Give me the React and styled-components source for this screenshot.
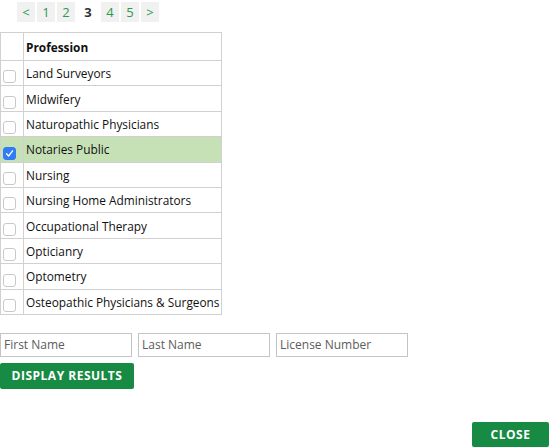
import React, { useState } from "react";
import styled, { createGlobalStyle } from "styled-components";

const GlobalStyle = createGlobalStyle`
  html, body {
    margin: 0;
    padding: 0;
    background: #fff;
    font-family: "Open Sans", "Liberation Sans", sans-serif;
  }
`;

const professions = [
  "Land Surveyors",
  "Midwifery",
  "Naturopathic Physicians",
  "Notaries Public",
  "Nursing",
  "Nursing Home Administrators",
  "Occupational Therapy",
  "Opticianry",
  "Optometry",
  "Osteopathic Physicians & Surgeons",
];

const pages = ["<", "1", "2", "3", "4", "5", ">"];

function App() {
  const [selected, setSelected] = useState("Notaries Public");

  return (
    <Page>
      <GlobalStyle />
      <Pager>
        {pages.map((p) => (
          <PageLink key={p} current={p === "3"}>
            {p}
          </PageLink>
        ))}
      </Pager>

      <Table>
        <thead>
          <tr>
            <HeadCell check />
            <HeadCell>Profession</HeadCell>
          </tr>
        </thead>
        <tbody>
          {professions.map((name) => {
            const on = name === selected;
            return (
              <Row key={name} active={on} onClick={() => setSelected(name)}>
                <CheckCell>
                  <Check checked={on}>
                    {on && (
                      <svg width="9" height="9" viewBox="0 0 9 9">
                        <path
                          d="M1.5 4.8 L3.6 7 L7.6 1.8"
                          fill="none"
                          stroke="#fff"
                          strokeWidth="1.3"
                          strokeLinecap="round"
                          strokeLinejoin="round"
                        />
                      </svg>
                    )}
                  </Check>
                </CheckCell>
                <NameCell>{name}</NameCell>
              </Row>
            );
          })}
        </tbody>
      </Table>

      <Fields>
        <Field placeholder="First Name" />
        <Field placeholder="Last Name" />
        <Field placeholder="License Number" />
      </Fields>
      <GreenButton wide>Display Results</GreenButton>

      <Footer>
        <GreenButton>Close</GreenButton>
      </Footer>
    </Page>
  );
}

const Page = styled.div`
  display: flex;
  flex-direction: column;
  height: 447px;
  width: 550px;
  box-sizing: border-box;
  padding-top: 2px;
`;

const Pager = styled.div`
  display: flex;
  gap: 2px;
  margin-left: 17px;
  height: 20px;
`;

const PageLink = styled.span`
  display: flex;
  align-items: center;
  justify-content: center;
  min-width: 18px;
  padding: 0 ${(p) => (p.current ? "2px" : "0")};
  height: 20px;
  font-size: 13px;
  font-weight: ${(p) => (p.current ? 700 : 400)};
  color: ${(p) => (p.current ? "#333" : "#2c9a4b")};
  background: ${(p) => (p.current ? "transparent" : "#f1f1f1")};
  cursor: pointer;
`;

const Table = styled.table`
  border-collapse: collapse;
  table-layout: fixed;
  margin-top: 10px;
  width: 222px;
  font-size: 11.85px;
  color: #111;
`;

const HeadCell = styled.th`
  border: 1px solid #d0d0d0;
  height: 27px;
  padding: 0 0 0 2px;
  text-align: left;
  font-weight: 700;
  width: ${(p) => (p.check ? "20px" : "auto")};
`;

const Row = styled.tr`
  height: 25.4px;
  background: ${(p) => (p.active ? "#c7e1b7" : "#fff")};
`;

const CheckCell = styled.td`
  border: 1px solid #d0d0d0;
  padding: 0 0 2px 2px;
  vertical-align: bottom;
  line-height: 0;
`;

const Check = styled.span`
  display: inline-flex;
  align-items: center;
  justify-content: center;
  box-sizing: border-box;
  width: 13px;
  height: 13px;
  border-radius: 3px;
  border: 1px solid ${(p) => (p.checked ? "#2f7cf6" : "#c9c9c9")};
  background: ${(p) => (p.checked ? "#2f7cf6" : "#fff")};
`;

const NameCell = styled.td`
  border: 1px solid #d0d0d0;
  padding: 0 0 0 2px;
  white-space: nowrap;
  vertical-align: middle;
`;

const Fields = styled.div`
  display: flex;
  gap: 6px;
  margin-top: 18px;
`;

const Field = styled.input`
  box-sizing: border-box;
  width: 132px;
  height: 24px;
  border: 1px solid #c4c4c4;
  padding: 0 3px;
  font-family: "Open Sans", "Liberation Sans", sans-serif;
  font-size: 12px;
  color: #333;
  outline: none;
  &::placeholder {
    color: #5c5c5c;
  }
`;

const GreenButton = styled.button`
  align-self: flex-start;
  box-sizing: border-box;
  width: ${(p) => (p.wide ? "134px" : "77px")};
  height: ${(p) => (p.wide ? "26px" : "25px")};
  margin-top: ${(p) => (p.wide ? "6px" : "0")};
  border: none;
  border-radius: 2px;
  background: #178a43;
  color: #fff;
  font-family: "Open Sans", "Liberation Sans", sans-serif;
  font-size: 12px;
  font-weight: 700;
  letter-spacing: 0.5px;
  text-transform: uppercase;
  cursor: pointer;
`;

const Footer = styled.div`
  margin-top: auto;
  display: flex;
  justify-content: flex-end;
  padding-right: 1px;
`;

export default App;
